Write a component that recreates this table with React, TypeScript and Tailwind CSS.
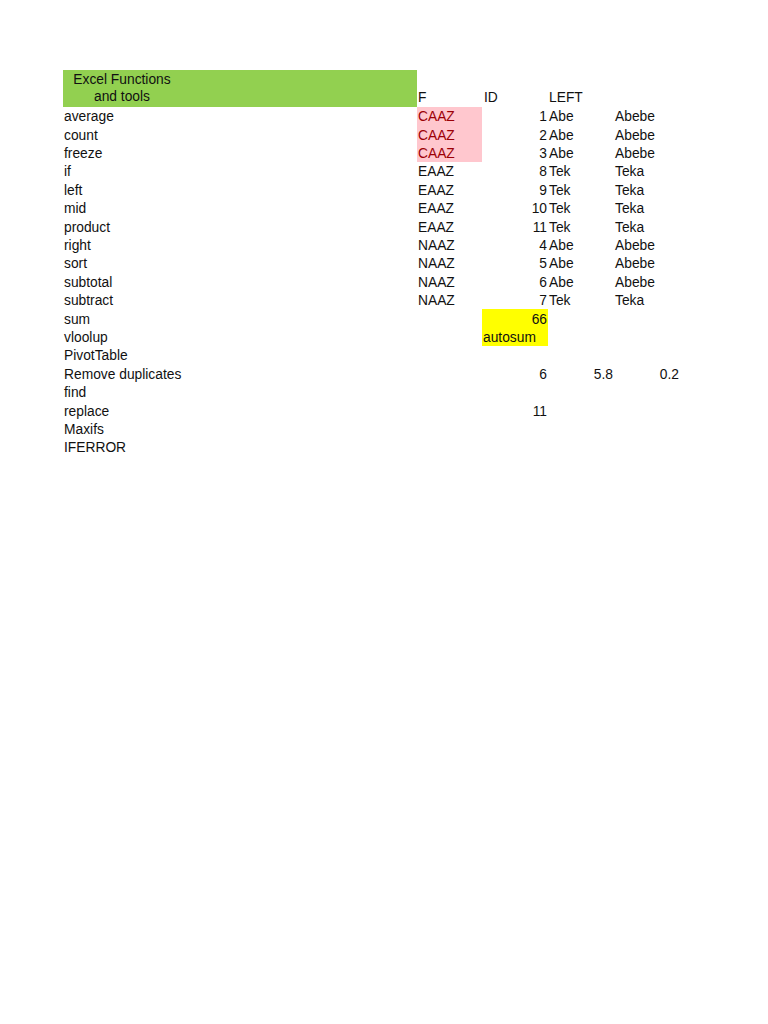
import clsx from "clsx";

type Cell = {
  text?: string;
  align?: "left" | "right";
  tone?: "bad" | "sum";
};

type Row = [string, Cell?, Cell?, Cell?, Cell?];

const rows: Row[] = [
  ["average", { text: "CAAZ", tone: "bad" }, { text: "1", align: "right" }, { text: "Abe" }, { text: "Abebe" }],
  ["count", { text: "CAAZ", tone: "bad" }, { text: "2", align: "right" }, { text: "Abe" }, { text: "Abebe" }],
  ["freeze", { text: "CAAZ", tone: "bad" }, { text: "3", align: "right" }, { text: "Abe" }, { text: "Abebe" }],
  ["if", { text: "EAAZ" }, { text: "8", align: "right" }, { text: "Tek" }, { text: "Teka" }],
  ["left", { text: "EAAZ" }, { text: "9", align: "right" }, { text: "Tek" }, { text: "Teka" }],
  ["mid", { text: "EAAZ" }, { text: "10", align: "right" }, { text: "Tek" }, { text: "Teka" }],
  ["product", { text: "EAAZ" }, { text: "11", align: "right" }, { text: "Tek" }, { text: "Teka" }],
  ["right", { text: "NAAZ" }, { text: "4", align: "right" }, { text: "Abe" }, { text: "Abebe" }],
  ["sort", { text: "NAAZ" }, { text: "5", align: "right" }, { text: "Abe" }, { text: "Abebe" }],
  ["subtotal", { text: "NAAZ" }, { text: "6", align: "right" }, { text: "Abe" }, { text: "Abebe" }],
  ["subtract", { text: "NAAZ" }, { text: "7", align: "right" }, { text: "Tek" }, { text: "Teka" }],
  ["sum", {}, { text: "66", align: "right", tone: "sum" }],
  ["vloolup", {}, { text: "autosum", tone: "sum" }],
  ["PivotTable"],
  ["Remove duplicates", {}, { text: "6", align: "right" }, { text: "5.8", align: "right" }, { text: "0.2", align: "right" }],
  ["find"],
  ["replace", {}, { text: "11", align: "right" }],
  ["Maxifs"],
  ["IFERROR"],
];

function SheetCell({ cell }: { cell?: Cell }) {
  return (
    <div
      className={clsx(
        "flex h-[18.4px] items-center overflow-visible whitespace-nowrap pt-[2px]",
        cell?.align === "right" ? "justify-end pr-[1px]" : "pl-[1px]",
        cell?.tone === "bad" && "bg-[#ffc7ce] text-[#9c0006]",
        cell?.tone === "sum" && "bg-[#ffff00]",
      )}
    >
      {cell?.text}
    </div>
  );
}

export default function App() {
  return (
    <div className="min-h-[1024px] w-full bg-white pl-[63px] pt-[70px] font-['Liberation_Sans',Arial,sans-serif] text-[13.8px] leading-none text-[#111]">
      <div className="grid w-fit grid-cols-[354px_65px_66px_66px_66px]">
        <div className="h-[37px] bg-[#92d050]">
          <div className="w-[118px] pt-[1px] text-center leading-[17px]">
            Excel Functions
            <br />
            and tools
          </div>
        </div>
        <div className="flex h-[37px] items-end pb-[2px] pl-[1px]">F</div>
        <div className="flex h-[37px] items-end pb-[2px] pl-[2px]">ID</div>
        <div className="flex h-[37px] items-end pb-[2px] pl-[1px]">LEFT</div>
        <div className="h-[37px]" />

        {rows.map(([label, b, c, d, e]) => (
          <div className="contents" key={label}>
            <div className="flex h-[18.4px] items-center whitespace-nowrap pl-[1px] pt-[2px]">{label}</div>
            <SheetCell cell={b} />
            <SheetCell cell={c} />
            <SheetCell cell={d} />
            <SheetCell cell={e} />
          </div>
        ))}
      </div>
    </div>
  );
}
